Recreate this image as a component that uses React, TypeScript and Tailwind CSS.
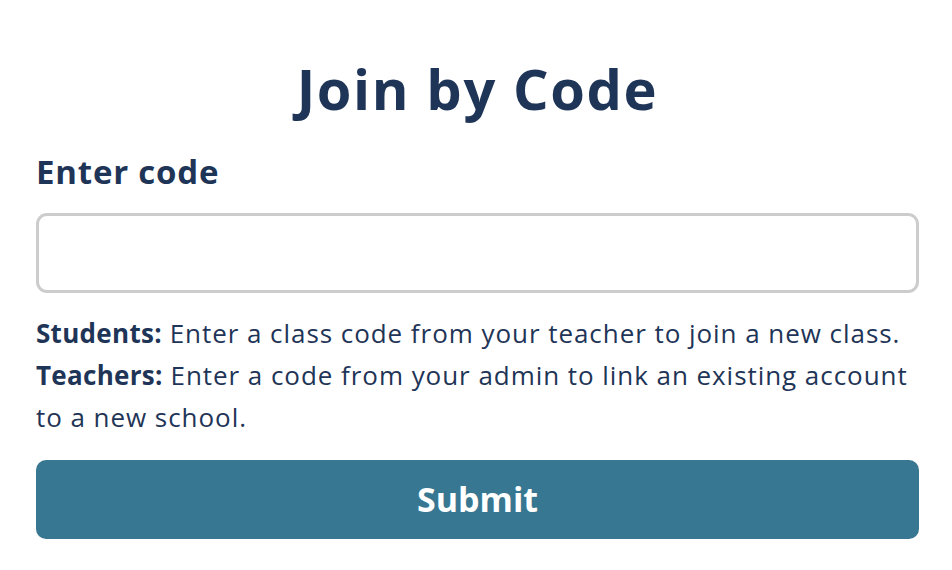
export default function App() {
  return (
    <div className="w-[952px] h-[570px] bg-white overflow-hidden" style={{ fontFamily: "'Open Sans', sans-serif" }}>
      <div className="pl-[36px] w-[919px] pt-[52px] flex flex-col text-[#1f3557]">
        <h1 className="text-center text-[56px] font-bold leading-[72px] tracking-[1.6px]">Join by Code</h1>
        <label className="mt-[28px] text-[33px] font-bold leading-[40px] tracking-[0.8px]">Enter code</label>
        <div className="mt-[21px] h-[80px] border-[3px] border-[#cccccc] rounded-[11px] bg-white"></div>
        <div className="mt-[19px] text-[26px] leading-[42px] tracking-[0.95px]">
          <p>
            <span className="font-bold tracking-[0.3px]">Students:</span> Enter a class code from your teacher to join a new class.
          </p>
          <p>
            <span className="font-bold tracking-[0.3px]">Teachers:</span> Enter a code from your admin to link an existing account to a new school.
          </p>
        </div>
        <button className="mt-[22px] h-[79px] rounded-[10px] bg-[#387791] text-white text-[34px] font-bold">Submit</button>
      </div>
    </div>
  );
}
